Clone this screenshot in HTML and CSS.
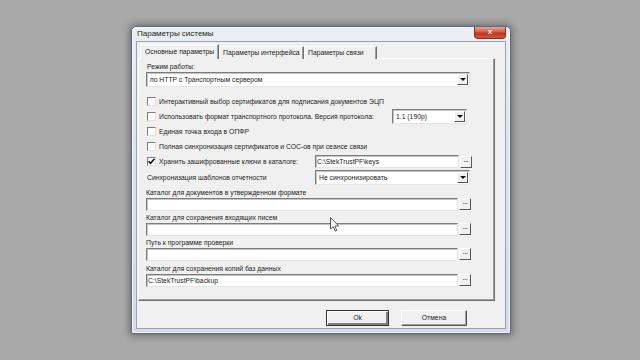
FILE: index.html
```html
<!DOCTYPE html>
<html lang="ru">
<head>
<meta charset="utf-8">
<title>Параметры системы</title>
<link rel="stylesheet" href="styles.css">
</head>
<body>
<div class="window">
  <div class="titlebar">
    <span class="title">Параметры системы</span>
    <span class="close">x</span>
  </div>
  <div class="client">
    <div class="tabs">
      <span class="tab active t1">Основные параметры</span>
      <span class="tab t2">Параметры интерфейса</span>
      <span class="tab t3">Параметры связи</span>
    </div>
    <div class="panel">
      <div class="label lbl-mode">Режим работы:</div>
      <div class="select wide"><span class="val">по HTTP с Транспортным сервером</span><span class="dd"></span></div>

      <div class="checks">
        <div class="crow"><span class="cb"></span><span class="ctext">Интерактивный выбор сертификатов для подписания документов ЭЦП</span></div>
        <div class="crow"><span class="cb"></span><span class="ctext ver-label">Использовать формат транспортного протокола. Версия протокола:</span><div class="select ver"><span class="val">1.1 (190р)</span><span class="dd"></span></div></div>
        <div class="crow"><span class="cb"></span><span class="ctext">Единая точка входа в ОПФР</span></div>
        <div class="crow"><span class="cb"></span><span class="ctext">Полная синхронизация сертификатов и СОС-ов при сеансе связи</span></div>
        <div class="crow"><span class="cb checked"><svg viewBox="0 0 9 9" width="9" height="9"><path d="M1.5 4.2 L3.5 6.3 L7.5 1.8" fill="none" stroke="#111" stroke-width="1.6"/></svg></span><span class="ctext keys-label">Хранить зашифрованные ключи в каталоге:</span><div class="field keys"><span class="val">C:\StekTrustPF\keys</span></div><span class="btn-dots">...</span></div>
      </div>

      <div class="srow"><span class="stext">Синхронизация шаблонов отчетности</span><div class="select sync"><span class="val">Не синхронизировать</span><span class="dd"></span></div></div>

      <div class="pblock first">
        <div class="label">Каталог для документов в утвержденном формате</div>
        <div class="prow"><div class="field path"></div><span class="btn-dots">...</span></div>
      </div>
      <div class="pblock">
        <div class="label">Каталог для сохранения входящих писем</div>
        <div class="prow"><div class="field path"></div><span class="btn-dots">...</span></div>
      </div>
      <div class="pblock">
        <div class="label">Путь к программе проверки</div>
        <div class="prow"><div class="field path"></div><span class="btn-dots">...</span></div>
      </div>
      <div class="pblock last">
        <div class="label">Каталог для сохранения копий баз данных</div>
        <div class="prow"><div class="field path"><span class="val">C:\StekTrustPF\backup</span></div><span class="btn-dots">...</span></div>
      </div>
    </div>
    <div class="buttons">
      <span class="button default">Ok</span>
      <span class="button">Отмена</span>
    </div>
  </div>
</div>
<svg class="cursor" width="10" height="16" viewBox="0 0 10 16"><path d="M0.5 0.5 L0.5 12 L3.2 9.6 L5.2 14.2 L6.8 13.5 L4.9 9 L8.6 9 Z" fill="#fff" stroke="#555" stroke-width="1"/></svg>
</body>
</html>
```

FILE: styles.css
```css
* { box-sizing: border-box; }
html, body { margin: 0; padding: 0; }
body {
  width: 640px;
  height: 360px;
  overflow: hidden;
  background: #a9a9a9;
  font-family: "Liberation Sans", Arial, sans-serif;
  font-size: 6.8px;
  color: #1c1c1c;
  position: relative;
}
.window {
  width: 380px;
  height: 308px;
  margin: 26px 0 0 131px;
  background: linear-gradient(#eceef1, #dfe2e8 40%, #d6dbe4);
  border: 1px solid #5e6886;
  border-radius: 5px 5px 2px 2px;
  box-shadow: 0 0 7px 2px rgba(40,40,40,.45), inset 0 0 0 1px #f4f6f9;
  display: flex;
  flex-direction: column;
  padding: 0 4px 4px;
}
.titlebar {
  height: 14px;
  display: flex;
  justify-content: space-between;
  align-items: flex-start;
}
.title {
  font-size: 8px;
  color: #222;
  padding: 2px 0 0 1px;
}
.close {
  width: 32px;
  height: 12px;
  background: linear-gradient(#eca595, #d75a40 45%, #c0321a 55%, #d0583a);
  border: 1px solid #7a3426;
  border-top: none;
  border-radius: 0 0 4px 4px;
  color: #fff;
  font-size: 8px;
  font-weight: bold;
  text-align: center;
  line-height: 10px;
}
.client {
  flex: 1;
  background: #f0f0f0;
  border: 1px solid #98a1ba;
  padding: 2px 5px 0 1px;
  display: flex;
  flex-direction: column;
}
.tabs {
  display: flex;
  height: 15px;
  margin-left: 2px;
  align-items: flex-end;
  position: relative;
  z-index: 1;
  margin-bottom: -1px;
}
.tab {
  height: 13px;
  line-height: 12px;
  padding-left: 3px;
  border-top: 1px solid #fff;
  border-left: 1px solid #fff;
  border-right: 1px solid #6e6e6e;
  box-shadow: inset -1px 0 0 #a0a0a0;
  background: #f0f0f0;
  white-space: nowrap;
}
.tab.active { height: 15px; line-height: 14px; padding-left: 4px; }
.t1 { width: 79px; }
.t2 { width: 85px; }
.t3 { width: 73px; }
.panel {
  height: 243px;
  margin-right: 5px;
  border-top: 1px solid #fff;
  border-left: 1px solid #fff;
  border-right: 1px solid #6e6e6e;
  border-bottom: 1px solid #6e6e6e;
  box-shadow: inset -1px -1px 0 #a0a0a0;
  padding: 4px 0 0 7px;
  display: flex;
  flex-direction: column;
}
.label {
  height: 10px;
  line-height: 9px;
  white-space: nowrap;
}
.lbl-mode { height: 9px; line-height: 8px; padding-left: 1px; }
.select, .field {
  background: #fff;
  border-top: 1px solid #7c7c7c;
  border-left: 1px solid #7c7c7c;
  border-right: 1px solid #e6e6e6;
  border-bottom: 1px solid #e6e6e6;
  box-shadow: inset 1px 1px 0 #c4c4c4;
  display: flex;
  align-items: center;
  white-space: nowrap;
  overflow: hidden;
}
.select { height: 15px; justify-content: space-between; padding-left: 2px; }
.val { padding-left: 1px; }
.dd {
  width: 11px;
  height: 11px;
  margin-right: 1px;
  background: #f0f0f0;
  border-top: 1px solid #fff;
  border-left: 1px solid #fff;
  border-right: 1px solid #555;
  border-bottom: 1px solid #555;
  position: relative;
}
.dd::after {
  content: "";
  position: absolute;
  left: 2px;
  top: 3px;
  border-left: 3px solid transparent;
  border-right: 3px solid transparent;
  border-top: 3px solid #111;
}
.wide { width: 324px; }
.checks { margin-top: 7px; display: flex; flex-direction: column; }
.crow {
  height: 15px;
  display: flex;
  align-items: center;
  white-space: nowrap;
  padding-left: 1px;
}
.cb {
  width: 9px;
  height: 9px;
  flex: none;
  background: #fff;
  border-top: 1px solid #7c7c7c;
  border-left: 1px solid #7c7c7c;
  border-right: 1px solid #e0e0e0;
  border-bottom: 1px solid #e0e0e0;
  margin-right: 3px;
  position: relative;
}
.cb svg { position: absolute; left: -1px; top: -1px; }
.ver-label { width: 233px; }
.ver { width: 75px; }
.keys-label { width: 156px; }
.field { height: 13px; }
.keys { width: 144px; height: 13px; }
.btn-dots {
  width: 12px;
  height: 12px;
  flex: none;
  background: #f0f0f0;
  border-top: 1px solid #fff;
  border-left: 1px solid #fff;
  border-right: 1px solid #555;
  border-bottom: 1px solid #555;
  font-size: 8px;
  line-height: 6px;
  letter-spacing: -0.5px;
  text-align: center;
  color: #222;
  margin-left: 1px;
}
.srow {
  height: 16px;
  display: flex;
  align-items: center;
  white-space: nowrap;
  padding-left: 1px;
}
.stext { width: 168px; }
.sync { width: 155px; }
.pblock { margin-top: 2px; display: flex; flex-direction: column; }
.pblock.first { margin-top: 3px; }
.pblock.last { margin-top: 3px; }
.prow { display: flex; align-items: flex-start; height: 13px; }
.path { width: 312px; }
.buttons {
  display: flex;
  gap: 12px;
  padding-left: 188px;
  margin-top: 9px;
}
.button {
  width: 66px;
  height: 16px;
  background: #f0f0f0;
  border-top: 1px solid #fff;
  border-left: 1px solid #fff;
  border-right: 1px solid #555;
  border-bottom: 1px solid #555;
  box-shadow: inset -1px -1px 0 #a0a0a0;
  text-align: center;
  line-height: 14px;
}
.button.default {
  width: 63px;
  border: 1px solid #333;
  box-shadow: inset 1px 1px 0 #fff, inset -2px -2px 0 #808080;
}
.cursor { position: absolute; left: 330px; top: 217px; }
```
